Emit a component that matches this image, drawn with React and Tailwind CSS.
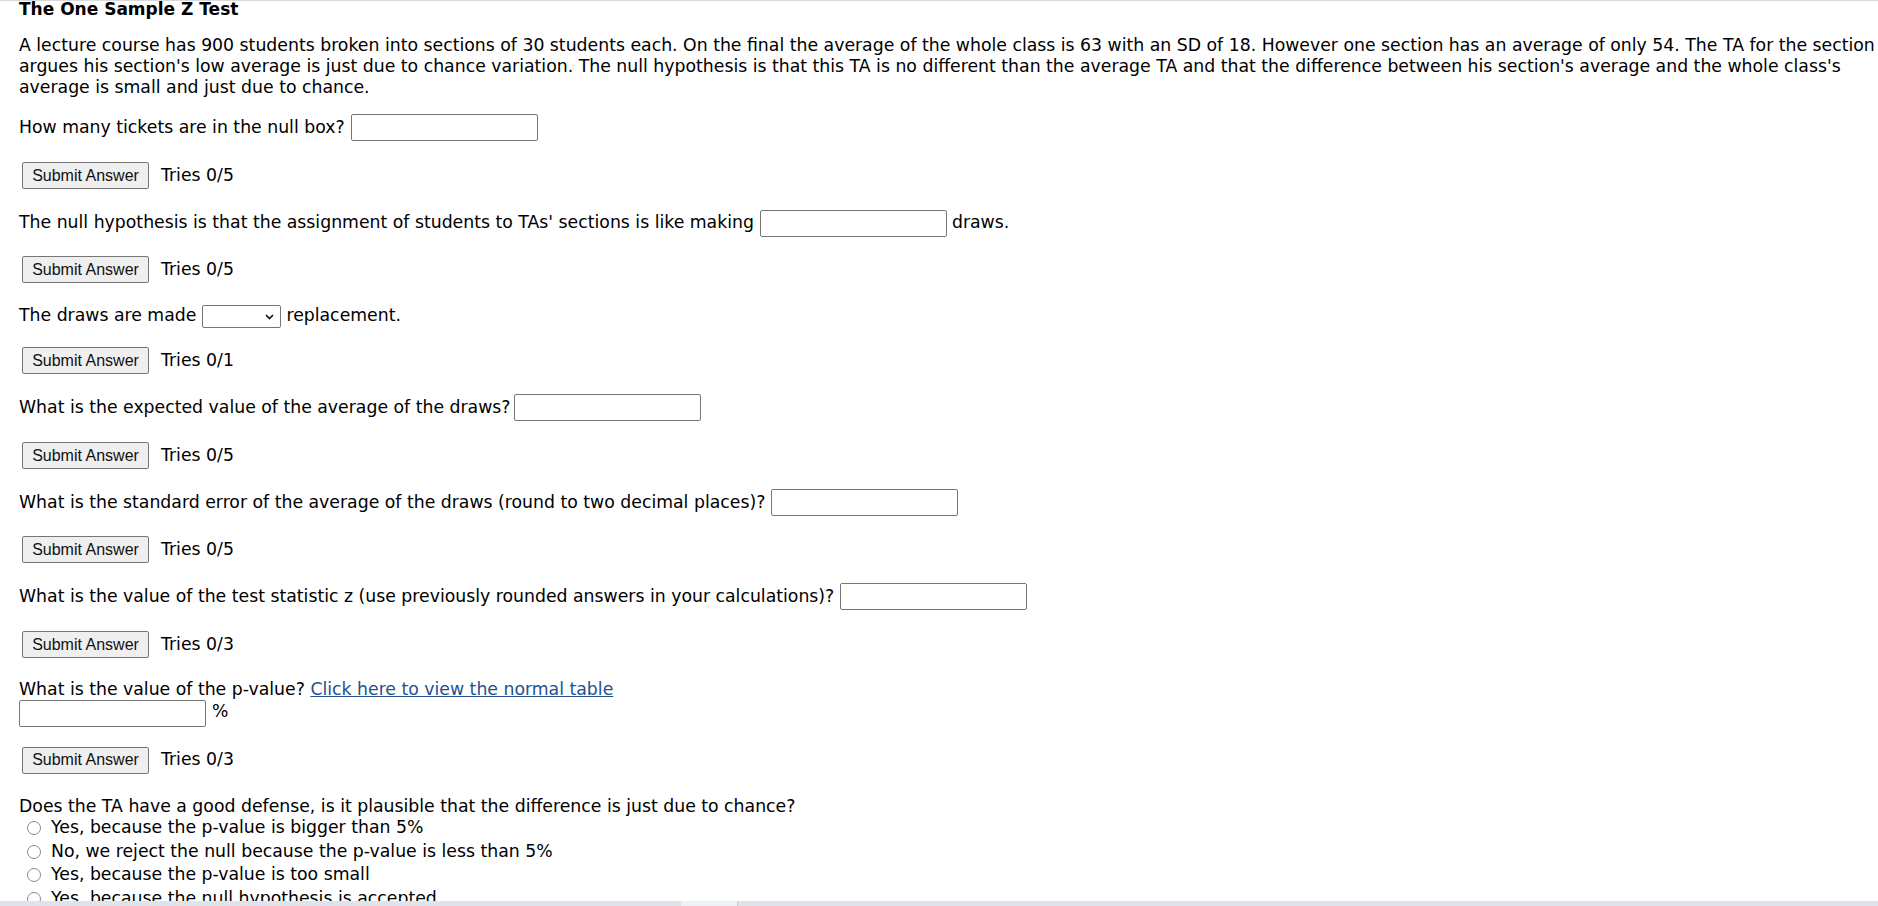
import React from "react";

function SubmitRow({ tries, className }) {
  return (
    <div className={"flex items-center h-[27px] " + className}>
      <button
        type="button"
        className="ml-[3px] w-[127px] h-[27px] rounded-[2px] border border-[#767676] bg-[#efefef] text-[16px] leading-none text-[#111] font-['Liberation_Sans',Arial,sans-serif] flex items-center justify-center"
      >
        Submit Answer
      </button>
      <span className="ml-[12px]">Tries {tries}</span>
    </div>
  );
}

function TextBox({ className = "" }) {
  return (
    <span
      className={
        "inline-block w-[187px] h-[27px] rounded-[2px] border border-[#767676] bg-white " +
        className
      }
    />
  );
}

function Radio({ label }) {
  return (
    <div className="flex items-center h-[23.5px]">
      <span className="ml-[26.5px] w-[14px] h-[14px] rounded-full border border-[#8a8a8a] bg-white" />
      <span className="ml-[10.5px]">{label}</span>
    </div>
  );
}

export default function App() {
  return (
    <div className="relative h-[906px] overflow-hidden bg-white text-black text-[17.3px] font-['DejaVu_Sans',Verdana,sans-serif]">
      <div className="border-t border-[#d9d9d9]" />
      <div className="pl-[19px]">
        <h1 className="font-bold text-[17px] leading-[16px] h-[16px]">The One Sample Z Test</h1>

        <p className="mt-[18px] leading-[21px] whitespace-nowrap">
          A lecture course has 900 students broken into sections of 30 students each. On the final the average of the whole class is 63 with an SD of 18. However one section has an average of only 54. The TA for the section
          <br />
          argues his section's low average is just due to chance variation. The null hypothesis is that this TA is no different than the average TA and that the difference between his section's average and the whole class's
          <br />
          average is small and just due to chance.
        </p>

        <div className="mt-[15.5px] flex items-center h-[28px]">
          <span>How many tickets are in the null box?</span>
          <TextBox className="ml-[6px]" />
        </div>
        <SubmitRow tries="0/5" className="mt-[20.5px]" />

        <div className="mt-[20px] flex items-center h-[28px]">
          <span>The null hypothesis is that the assignment of students to TAs' sections is like making</span>
          <TextBox className="ml-[6px]" />
          <span className="ml-[5px]">draws.</span>
        </div>
        <SubmitRow tries="0/5" className="mt-[19px]" />

        <div className="mt-[19px] flex items-center h-[28px]">
          <span>The draws are made</span>
          <span className="ml-[6px] relative inline-flex items-center w-[79px] h-[23px] rounded-[2px] border border-[#767676] bg-white">
            <svg
              className="absolute right-[6px] top-[8px]"
              width="9"
              height="6"
              viewBox="0 0 9 6"
              fill="none"
            >
              <path d="M1 1 L4.5 4.5 L8 1" stroke="#111" strokeWidth="1.6" />
            </svg>
          </span>
          <span className="ml-[5px]">replacement.</span>
        </div>
        <SubmitRow tries="0/1" className="mt-[17px]" />

        <div className="mt-[19.5px] flex items-center h-[28px]">
          <span>What is the expected value of the average of the draws?</span>
          <TextBox className="ml-[3px]" />
        </div>
        <SubmitRow tries="0/5" className="mt-[20.5px]" />

        <div className="mt-[19.5px] flex items-center h-[28px]">
          <span>What is the standard error of the average of the draws (round to two decimal places)?</span>
          <TextBox className="ml-[6px]" />
        </div>
        <SubmitRow tries="0/5" className="mt-[19.5px]" />

        <div className="mt-[19.5px] flex items-center h-[28px]">
          <span>What is the value of the test statistic z (use previously rounded answers in your calculations)?</span>
          <TextBox className="ml-[6px]" />
        </div>
        <SubmitRow tries="0/3" className="mt-[20.5px]" />

        <div className="mt-[21px] leading-[21px] h-[21px]">
          What is the value of the p-value?{" "}
          <a href="#" className="text-[#24508f] underline">
            Click here to view the normal table
          </a>
        </div>
        <div className="flex items-center h-[27px]">
          <TextBox />
          <span className="ml-[6px] -mt-[3px]">%</span>
        </div>
        <SubmitRow tries="0/3" className="mt-[19.5px]" />

        <div className="mt-[22px] leading-[21px] h-[21px]">
          Does the TA have a good defense, is it plausible that the difference is just due to chance?
        </div>
      </div>
      <div>
        <Radio label="Yes, because the p-value is bigger than 5%" />
        <Radio label="No, we reject the null because the p-value is less than 5%" />
        <Radio label="Yes, because the p-value is too small" />
        <Radio label="Yes, because the null hypothesis is accepted" />
      </div>

      <div className="fixed bottom-0 left-0 right-0 h-[5px] bg-[#dde4ec]">
        <div className="absolute top-0 bottom-0 left-[681px] w-[57px] bg-[#eef2f6] border-r border-[#c5ccd4]" />
      </div>
    </div>
  );
}
